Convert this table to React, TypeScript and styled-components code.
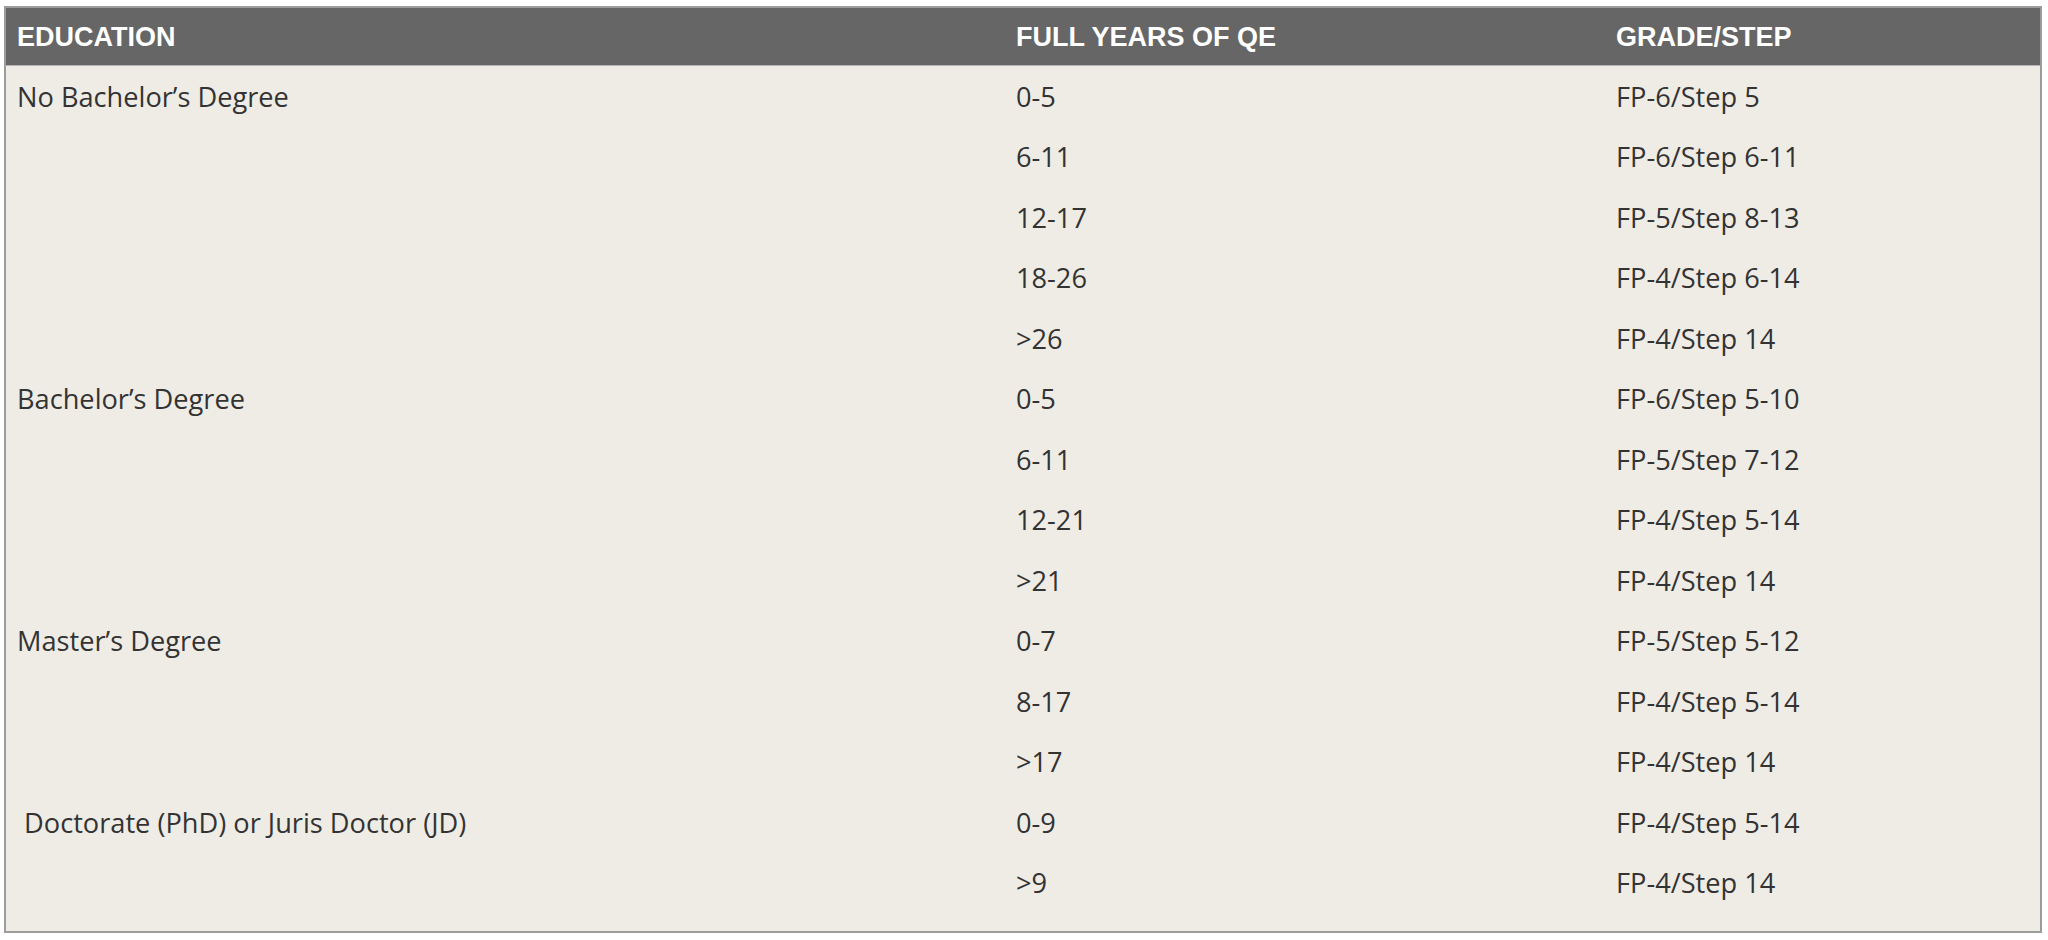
import React from 'react';
import styled, { createGlobalStyle } from 'styled-components';

const GlobalStyle = createGlobalStyle`
    html, body {
        margin: 0;
        padding: 0;
        background: #ffffff;
    }
`;

const Page = styled.div`
    padding: 6px 6px 6px 4px;
`;

const Frame = styled.div`
    border: 2px solid #9c9c9c;
    background: #efece6;
    padding-bottom: 19px;
`;

const Table = styled.table`
    width: 100%;
    border-collapse: collapse;
    table-layout: fixed;
`;

const HeadRow = styled.tr`
    background: #666666;
    border-bottom: 1px solid #b4b4b4;
`;

const HeadCell = styled.th`
    height: 57px;
    padding: 1px 11px 0;
    box-sizing: border-box;
    text-align: left;
    vertical-align: middle;
    font-family: 'Liberation Sans', Arial, sans-serif;
    font-weight: 700;
    font-size: 27px;
    line-height: 30px;
    color: #ffffff;
    text-transform: uppercase;
`;

const Cell = styled.td`
    height: 60.5px;
    padding: 3px 11px 0;
    box-sizing: border-box;
    vertical-align: middle;
    font-family: 'Open Sans', 'Liberation Sans', sans-serif;
    font-size: 27.2px;
    line-height: 40px;
    color: #333333;
    white-space: pre;
`;

type Group = { education: string; rows: [string, string][] };

const groups: Group[] = [
    {
        education: 'No Bachelor’s Degree',
        rows: [
            ['0-5', 'FP-6/Step 5'],
            ['6-11', 'FP-6/Step 6-11'],
            ['12-17', 'FP-5/Step 8-13'],
            ['18-26', 'FP-4/Step 6-14'],
            ['>26', 'FP-4/Step 14'],
        ],
    },
    {
        education: 'Bachelor’s Degree',
        rows: [
            ['0-5', 'FP-6/Step 5-10'],
            ['6-11', 'FP-5/Step 7-12'],
            ['12-21', 'FP-4/Step 5-14'],
            ['>21', 'FP-4/Step 14'],
        ],
    },
    {
        education: 'Master’s Degree',
        rows: [
            ['0-7', 'FP-5/Step 5-12'],
            ['8-17', 'FP-4/Step 5-14'],
            ['>17', 'FP-4/Step 14'],
        ],
    },
    {
        education: ' Doctorate (PhD) or Juris Doctor (JD)',
        rows: [
            ['0-9', 'FP-4/Step 5-14'],
            ['>9', 'FP-4/Step 14'],
        ],
    },
];

export default function App() {
    return (
        <>
            <GlobalStyle />
            <Page>
                <Frame>
                    <Table>
                        <colgroup>
                            <col style={{ width: 999 }} />
                            <col style={{ width: 600 }} />
                            <col />
                        </colgroup>
                        <thead>
                            <HeadRow>
                                <HeadCell>Education</HeadCell>
                                <HeadCell>Full Years of QE</HeadCell>
                                <HeadCell>Grade/Step</HeadCell>
                            </HeadRow>
                        </thead>
                        <tbody>
                            {groups.map((group) =>
                                group.rows.map(([years, grade], i) => (
                                    <tr key={group.education + years}>
                                        <Cell>{i === 0 ? group.education : ''}</Cell>
                                        <Cell>{years}</Cell>
                                        <Cell>{grade}</Cell>
                                    </tr>
                                ))
                            )}
                        </tbody>
                    </Table>
                </Frame>
            </Page>
        </>
    );
}
